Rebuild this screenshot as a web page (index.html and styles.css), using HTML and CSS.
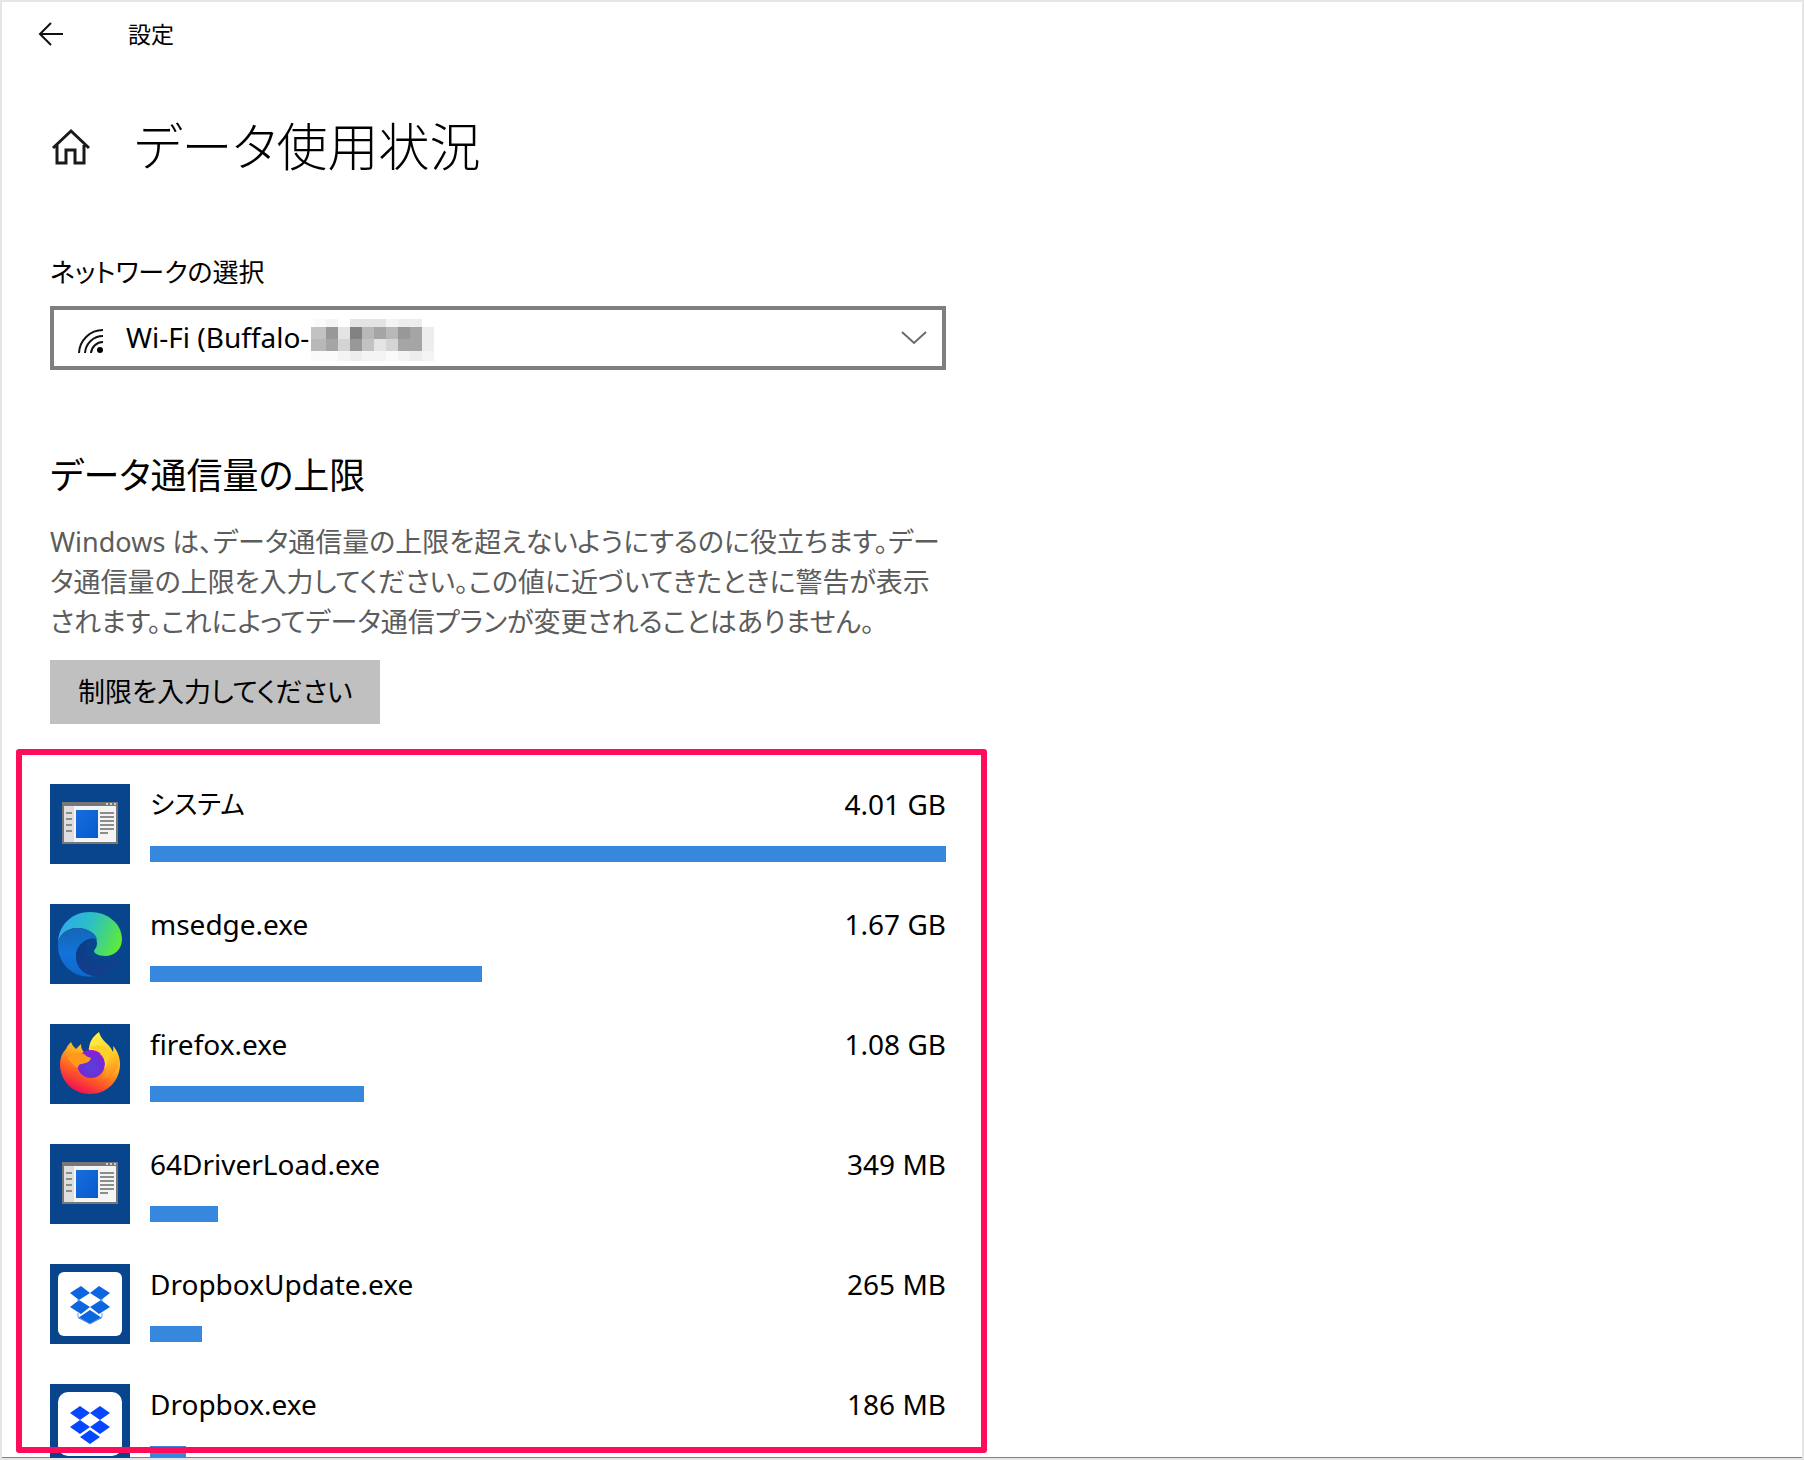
FILE: index.html
```html
<!DOCTYPE html>
<html lang="ja">
<head>
    <meta charset="UTF-8">
    <meta name="viewport" content="width=device-width, initial-scale=1.0">
    <title>設定</title>
    <link rel="stylesheet" href="styles.css">
</head>
<body>
    <!-- アイコン定義 -->
    <svg class="icon-defs" aria-hidden="true">
        <defs>
            <linearGradient id="blue-pane" x1="0" y1="0" x2="1" y2="1">
                <stop offset="0" stop-color="#1a6fdc"/>
                <stop offset="1" stop-color="#0459cf"/>
            </linearGradient>
            <linearGradient id="edge-green" x1="0" y1="0.3" x2="1" y2="0.6">
                <stop offset="0" stop-color="#2fa8f0"/>
                <stop offset="0.45" stop-color="#2cbfc4"/>
                <stop offset="0.75" stop-color="#45d67c"/>
                <stop offset="1" stop-color="#5fea35"/>
            </linearGradient>
            <linearGradient id="edge-blue" x1="0.3" y1="0" x2="0.4" y2="1">
                <stop offset="0" stop-color="#1565b4"/>
                <stop offset="0.5" stop-color="#1173d8"/>
                <stop offset="1" stop-color="#0d68cf"/>
            </linearGradient>
            <linearGradient id="edge-dark" x1="0" y1="0" x2="1" y2="0.6">
                <stop offset="0" stop-color="#0d3c86"/>
                <stop offset="1" stop-color="#12408f"/>
            </linearGradient>
            <linearGradient id="fox-body" x1="0.8" y1="0.1" x2="0.3" y2="1">
                <stop offset="0" stop-color="#ffe23c"/>
                <stop offset="0.35" stop-color="#ffa61e"/>
                <stop offset="0.65" stop-color="#ff5a26"/>
                <stop offset="1" stop-color="#ee0a57"/>
            </linearGradient>
            <linearGradient id="fox-tail" x1="0.3" y1="0" x2="0.6" y2="1">
                <stop offset="0" stop-color="#fff44a"/>
                <stop offset="0.6" stop-color="#ffc926"/>
                <stop offset="1" stop-color="#ff8a1f"/>
            </linearGradient>
            <radialGradient id="fox-globe" cx="0.5" cy="0.6" r="0.6">
                <stop offset="0" stop-color="#5a3fd8"/>
                <stop offset="0.6" stop-color="#6b2fd6"/>
                <stop offset="1" stop-color="#9a18dc"/>
            </radialGradient>
            <symbol id="app-window" viewBox="0 0 80 80">
                <rect x="12" y="18" width="56" height="42" fill="#777"/>
                <rect x="14" y="22" width="52" height="36" fill="#f4f4f4"/>
                <rect x="14" y="22" width="10" height="36" fill="#dedede"/>
                <path d="M56 20h2M60 20h2M64 20h2" stroke="#ccc" stroke-width="2"/>
                <rect x="26" y="26" width="22" height="28" fill="url(#blue-pane)"/>
                <path d="M16 29h6M16 35h6M16 41h6M16 47h6" stroke="#8c8c8c" stroke-width="2"/>
                <path d="M50 29h14M50 33h14M50 37h14M50 41h14M50 45h14M50 49h8" stroke="#8c8c8c" stroke-width="2"/>
            </symbol>
        </defs>
    </svg>

    <div class="window">
        <!-- タイトルバー -->
        <header class="title-bar">
            <button class="back-button" type="button" aria-label="戻る">
                <svg width="26" height="26" viewBox="0 0 26 26"><path d="M25 13H2M13 2L2 13l11 11" fill="none" stroke="#111" stroke-width="2"/></svg>
            </button>
            <span class="title-text">設定</span>
        </header>

        <main class="content">
            <div class="page-heading">
                <a class="home-link" href="#" aria-label="ホーム">
                    <svg width="40" height="40" viewBox="0 0 40 40"><path d="M3 22L21 5l18 17M7 19v18h9V24h9v13h9V19" fill="none" stroke="#1a1a1a" stroke-width="3"/></svg>
                </a>
                <h1>データ使用状況</h1>
            </div>

            <!-- ネットワークの選択 -->
            <label class="field-label" for="network">ネットワークの選択</label>
            <div class="network-select">
                <select id="network">
                    <option>Wi-Fi (Buffalo-</option>
                </select>
                <svg class="wifi-icon" width="26" height="26" viewBox="0 0 26 26">
                    <g fill="none" stroke="#111" stroke-width="2">
                        <path d="M1 25A24 24 0 0 1 25 2"/>
                        <path d="M7 25A18 18 0 0 1 25 8"/>
                        <path d="M13 25A12 12 0 0 1 25 14"/>
                    </g>
                    <circle cx="22" cy="22" r="3" fill="#000"/>
                </svg>
                <svg class="mosaic" width="123" height="42" viewBox="0 0 123 42" shape-rendering="crispEdges">
                    <path fill="#fff" d="M0 0h123v42H0z"/>
                    <path fill="#fafafa" d="M3 0h12v8H3zM0 32h27v10H0zM75 32h12v10H75z"/>
                    <path fill="#f4f4f4" d="M15 0h12v8H15zM75 0h12v8H75zM27 32h12v10H27zM51 32h24v10H51zM87 32h12v10H87zM111 32h12v10h-12z"/>
                    <path fill="#e4e4e4" d="M39 0h24v8H39zM63 0h12v8H63zM27 8h12v12H27zM63 20h12v12H63z"/>
                    <path fill="#ededed" d="M87 0h24v8H87zM111 8h12v24h-12zM39 32h12v10H39zM99 32h12v10H99z"/>
                    <path fill="#c2c2c2" d="M0 8h15v12H0zM51 20h12v12H51z"/>
                    <path fill="#b8b8b8" d="M0 20h15v12H0zM51 8h12v12H51zM75 8h12v12H75z"/>
                    <path fill="#a5a5a5" d="M15 20h12v12H15zM63 8h12v12H63zM99 8h12v24H99zM87 20h12v12H87z"/>
                    <path fill="#989898" d="M15 8h12v12H15zM39 20h12v12H39zM87 8h12v12H87z"/>
                    <path fill="#828282" d="M39 8h12v12H39z"/>
                    <path fill="#d4d4d4" d="M27 20h12v12H27zM75 20h12v12H75z"/>
                </svg>
                <svg class="chevron" width="26" height="14" viewBox="0 0 26 14"><path d="M1 1l12 11L25 1" fill="none" stroke="#6a6a6a" stroke-width="2"/></svg>
            </div>

            <!-- データ通信量の上限 -->
            <h2>データ通信量の上限</h2>
            <p class="description">Windows は、データ通信量の上限を超えないようにするのに役立ちます。デー<br>タ通信量の上限を入力してください。この値に近づいてきたときに警告が表示<br>されます。これによってデータ通信プランが変更されることはありません。</p>
            <button class="limit-button" type="button">制限を入力してください</button>

            <!-- アプリごとの使用量 -->
            <section class="usage">
                <ul class="usage-list">
                    <li class="usage-item">
                        <svg class="app-icon"><use href="#app-window"/></svg>
                        <div class="usage-body">
                            <div class="usage-text"><span class="name-ja">システム</span><span>4.01 GB</span></div>
                            <div class="usage-bar" style="width: 100%"></div>
                        </div>
                    </li>
                    <li class="usage-item">
                        <svg class="app-icon" viewBox="0 0 80 80">
                            <path d="M8 40C8 21 22 8 40 8c18 0 32 12 32 27 0 10-7 17-17 17-7 0-11-3-11-5 0-1 3-3 3-8 0-9-9-15-20-15C16 24 8 32 8 40z" fill="url(#edge-green)"/>
                            <path d="M8 41c0-9 8-17 19-17 11 0 20 6 20 12-2-2-5-2-8-1-8 3-13 9-13 17 0 10 7 19 20 20-21 4-38-11-38-31z" fill="url(#edge-blue)"/>
                            <path d="M39 35c-8 3-13 9-13 17 0 11 8 20 20 20 9 0 17-6 21-13 2-3 0-4-2-3-3 2-7 3-11 3-10 0-18-7-18-15 0-4 1-7 3-9z" fill="url(#edge-dark)"/>
                        </svg>
                        <div class="usage-body">
                            <div class="usage-text"><span>msedge.exe</span><span>1.67 GB</span></div>
                            <div class="usage-bar" style="width: 41.7%"></div>
                        </div>
                    </li>
                    <li class="usage-item">
                        <svg class="app-icon" viewBox="0 0 80 80">
                            <path d="M21 18c1 3 3 5 5 7l5-5c0 4 1 6 3 8h30l-1-6c5 6 7 12 7 18 0 17-13 30-30 30S10 57 10 40c0-6 2-11 6-15 1-3 3-5 5-7z" fill="url(#fox-body)"/>
                            <path d="M49 8c-7 5-10 11-10 18l14 8c4 6 4 13 1 20 8-2 15-9 15-17 0-5-2-10-5-14l-1 5C60 20 51 17 49 8z" fill="url(#fox-tail)"/>
                            <circle cx="41" cy="40" r="14" fill="url(#fox-globe)"/>
                            <path d="M38 25c5-1 11 0 15 4l-3 1c5 4 6 10 4 15 5-5 6-13 2-20-4-5-12-5-18 0z" fill="#ffcf29"/>
                            <path d="M18 34c4-5 10-7 16-4 2 2 4 3 7 4-1 4-5 5-9 6-3 0-4 2-4 4-4-2-8-6-10-10z" fill="#ff9a1c"/>
                        </svg>
                        <div class="usage-body">
                            <div class="usage-text"><span>firefox.exe</span><span>1.08 GB</span></div>
                            <div class="usage-bar" style="width: 26.9%"></div>
                        </div>
                    </li>
                    <li class="usage-item">
                        <svg class="app-icon"><use href="#app-window"/></svg>
                        <div class="usage-body">
                            <div class="usage-text"><span>64DriverLoad.exe</span><span>349 MB</span></div>
                            <div class="usage-bar" style="width: 8.6%"></div>
                        </div>
                    </li>
                    <li class="usage-item">
                        <svg class="app-icon" viewBox="0 0 80 80">
                            <rect x="8" y="8" width="64" height="64" rx="6" fill="#fff"/>
                            <path d="M31 22l9 7-11 7-9-7zM49 22l11 7-9 7-11-7zM29 36l11 7-9 7-11-7zM51 36l9 7-11 7-9-7zM40 46l12 8-12 6-12-6z" fill="#0d66e0"/>
                            <path d="M28 35v3M52 35v3M28 49v4l12 7 12-7v-4" fill="none" stroke="#5b9bee" stroke-width="1"/>
                        </svg>
                        <div class="usage-body">
                            <div class="usage-text"><span>DropboxUpdate.exe</span><span>265 MB</span></div>
                            <div class="usage-bar" style="width: 6.5%"></div>
                        </div>
                    </li>
                    <li class="usage-item">
                        <svg class="app-icon" viewBox="0 0 80 80">
                            <rect x="8" y="8" width="64" height="64" rx="10" fill="#fff"/>
                            <path d="M30 22l10 7-10 7-10-7zM50 22l10 7-10 7-10-7zM30 36l10 7-10 7-10-7zM50 36l10 7-10 7-10-7zM40 46l10 7-10 7-10-7z" fill="#0547ff"/>
                        </svg>
                        <div class="usage-body">
                            <div class="usage-text"><span>Dropbox.exe</span><span>186 MB</span></div>
                            <div class="usage-bar" style="width: 4.5%"></div>
                        </div>
                    </li>
                </ul>
                <div class="highlight"></div>
            </section>
        </main>
    </div>
</body>
</html>
```

FILE: styles.css
```css
* {
    margin: 0;
    padding: 0;
    box-sizing: border-box;
}

body {
    font-family: 'Noto Sans', 'Noto Sans CJK JP', sans-serif;
    font-feature-settings: 'palt';
    font-size: 28px;
    line-height: 40px;
    color: #000;
    background: #e6e6e6;
}

button,
select {
    font: inherit;
    font-feature-settings: inherit;
    color: inherit;
    border: none;
    border-radius: 0;
    background: none;
}

.icon-defs {
    position: absolute;
    width: 0;
    height: 0;
}

/* ウィンドウ枠 */
.window {
    display: flex;
    flex-direction: column;
    height: 100vh;
    overflow: hidden;
    background: #fff;
    border: 2px solid #e6e6e6;
    box-shadow: inset 0 -1px 0 #808080;
}

/* タイトルバー */
.title-bar {
    display: flex;
    align-items: center;
    gap: 64px;
    height: 64px;
    padding-left: 36px;
}

.back-button,
.home-link {
    display: flex;
}

.title-text {
    font-size: 23px;
}

/* メイン */
.content {
    flex: 1;
    min-height: 0;
    display: flex;
    flex-direction: column;
    align-items: flex-start;
    width: 100%;
    max-width: 944px;
    padding-left: 48px;
}

.page-heading {
    display: flex;
    align-items: center;
    gap: 44px;
    height: 160px;
}

h1 {
    font-size: 51px;
    font-weight: 300;
    line-height: 80px;
}

.field-label {
    margin-top: 26px;
    font-size: 26px;
}

/* ネットワーク選択 */
.network-select {
    position: relative;
    width: 100%;
    margin-top: 14px;
}

.network-select select {
    display: block;
    appearance: none;
    width: 100%;
    height: 64px;
    padding: 0 0 2px 72px;
    border: 4px solid #7f7f7f;
}

.wifi-icon {
    position: absolute;
    left: 28px;
    top: 22px;
}

.mosaic {
    position: absolute;
    left: 261px;
    top: 13px;
}

.chevron {
    position: absolute;
    right: 19px;
    top: 25px;
}

/* データ通信量の上限 */
h2 {
    margin-top: 80px;
    font-size: 36px;
    font-weight: 400;
    line-height: 52px;
}

.description {
    margin-top: 20px;
    font-size: 27px;
    color: #5c5c5c;
    white-space: nowrap;
}

.limit-button {
    margin-top: 18px;
    height: 64px;
    padding: 0 28px;
    font-size: 27px;
    background: #c0c0c0;
}

/* 使用量リスト */
.usage {
    position: relative;
    flex: 1;
    min-height: 0;
    width: 100%;
    margin-top: 60px;
}

.usage-list {
    display: grid;
    gap: 40px;
    height: 100%;
    overflow: hidden;
    list-style: none;
}

.usage-item {
    display: flex;
    gap: 20px;
    height: 80px;
}

.app-icon {
    flex-shrink: 0;
    width: 80px;
    height: 80px;
    background: #08458c;
}

.usage-body {
    flex: 1;
}

.usage-text {
    display: flex;
    justify-content: space-between;
    height: 62px;
}

.name-ja {
    font-size: 26px;
}

.usage-bar {
    height: 16px;
    background: #3787dc;
}

/* 強調枠 */
.highlight {
    position: absolute;
    inset: -35px -41px 5px -34px;
    border: 6px solid #ff0d5b;
    border-radius: 3px;
}
```
